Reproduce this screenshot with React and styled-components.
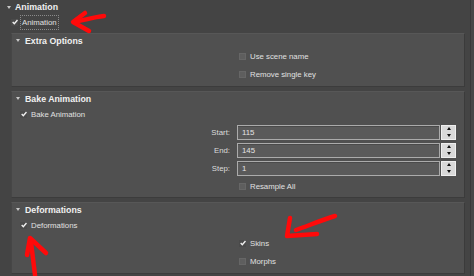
import React from "react";
import styled, { createGlobalStyle } from "styled-components";

const GlobalStyle = createGlobalStyle`
  html, body {
    margin: 0;
    padding: 0;
    background: #444444;
    overflow: hidden;
  }
  * {
    box-sizing: border-box;
  }
`;

const Screen = styled.div`
  position: relative;
  display: flex;
  width: 474px;
  height: 276px;
  overflow: hidden;
  background: #444444;
  font-family: "Liberation Sans", Arial, sans-serif;
  color: #e0e0e0;
`;

const Main = styled.div`
  flex: 1;
  display: flex;
  flex-direction: column;
`;

const ScrollTrack = styled.div`
  width: 4px;
  background: #474747;
  border-left: 1px solid #393939;
`;

const RollHeader = styled.div`
  height: ${p => p.h || 13}px;
  display: flex;
  align-items: center;
  padding-left: ${p => p.indent}px;
  font-size: 8.8px;
  font-weight: bold;
  color: #f0f0f0;
`;

const Triangle = styled.span`
  width: 0;
  height: 0;
  border-left: 2.5px solid transparent;
  border-right: 2.5px solid transparent;
  border-top: 3px solid #c8c8c8;
  margin-right: ${p => p.gap}px;
`;

const Row = styled.div`
  height: ${p => p.h || 18}px;
  display: flex;
  align-items: center;
  padding-left: ${p => p.indent}px;
  font-size: 7.8px;
`;

const Box = styled.span`
  width: 7px;
  height: 7px;
  flex: none;
  display: inline-flex;
  align-items: center;
  justify-content: center;
  background: ${p => (p.checked ? "#4a4a4a" : "#5e5e5e")};
  border: 1px solid ${p => (p.checked ? "#4a4a4a" : "#666666")};
  margin-right: 2px;
`;

const Label = styled.span`
  padding: 2px 1px;
  border: 1px dotted ${p => (p.focused ? "#8a8a8a" : "transparent")};
  white-space: nowrap;
`;

const Panels = styled.div`
  display: flex;
  flex-direction: column;
  gap: 4px;
  margin: 3px 5px 0 11px;
`;

const Panel = styled.section`
  background: #505050;
  border-top: 1px solid #575757;
  border-bottom: 1px solid #3c3c3c;
  border-right: 1px solid #3b3b3b;
  border-left: 1px solid #464646;
  padding-bottom: ${p => p.pb}px;
`;

const SpinRow = styled.div`
  height: 18px;
  display: grid;
  grid-template-columns: 218px 203px 15px;
  column-gap: 7px;
  align-items: center;
  font-size: 7.8px;
  & > :last-child {
    margin-left: -6px;
  }
`;

const SpinLabel = styled.span`
  text-align: right;
  color: #dcdcdc;
`;

const Field = styled.div`
  height: 15px;
  display: flex;
  align-items: center;
  padding-left: 4px;
  background: #5a5a5a;
  border: 1px solid #ababab;
  box-shadow: inset 0 1px 0 #4a4a4a;
  color: #e4e4e4;
`;

const Spinner = styled.div`
  width: 15px;
  height: 15px;
  display: flex;
  flex-direction: column;
  background: #d9d9d9;
  border: 1px solid #efefef;
`;

const SpinHalf = styled.div`
  flex: 1;
  display: flex;
  align-items: center;
  justify-content: center;
  &::after {
    content: "";
    width: 0;
    height: 0;
    border-left: 2.5px solid transparent;
    border-right: 2.5px solid transparent;
    ${p =>
      p.up
        ? "border-bottom: 3px solid #111;"
        : "border-top: 3px solid #111;"}
  }
`;

const Marks = styled.svg`
  position: absolute;
  left: 0;
  top: 0;
  pointer-events: none;
`;

const Check = ({ checked }) => (
  <Box checked={checked}>
    {checked && (
      <svg width="6" height="6" viewBox="0 0 7 7" style={{ flex: "none" }}>
        <path d="M0.8 3.6 L2.7 5.6 L6.4 1.2" stroke="#f0f0f0" strokeWidth="1.6" fill="none" />
      </svg>
    )}
  </Box>
);

const CheckRow = ({ indent, checked, focused, children }) => (
  <Row indent={indent} h={focused ? 16 : 18}>
    <Check checked={checked} />
    <Label focused={focused}>{children}</Label>
  </Row>
);

const Header = ({ indent, children }) => (
  <RollHeader indent={indent}>
    <Triangle gap={5} />
    {children}
  </RollHeader>
);

const RIGHT = 227;

const fields = [
  { label: "Start:", value: "115" },
  { label: "End:", value: "145" },
  { label: "Step:", value: "1" }
];

export default function App() {
  return (
    <Screen>
      <GlobalStyle />
      <Main>
        <RollHeader indent={7} h={14}>
          <Triangle gap={4} />
          Animation
        </RollHeader>
        <CheckRow indent={11} checked focused>
          Animation
        </CheckRow>

        <Panels>
          <Panel pb={3}>
            <Header indent={4}>Extra Options</Header>
            <CheckRow indent={RIGHT}>Use scene name</CheckRow>
            <CheckRow indent={RIGHT}>Remove single key</CheckRow>
          </Panel>

          <Panel pb={2}>
            <Header indent={4}>Bake Animation</Header>
            <CheckRow indent={8} checked>
              Bake Animation
            </CheckRow>
            {fields.map(f => (
              <SpinRow key={f.label}>
                <SpinLabel>{f.label}</SpinLabel>
                <Field>{f.value}</Field>
                <Spinner>
                  <SpinHalf up />
                  <SpinHalf />
                </Spinner>
              </SpinRow>
            ))}
            <CheckRow indent={RIGHT}>Resample All</CheckRow>
          </Panel>

          <Panel pb={3}>
            <Header indent={4}>Deformations</Header>
            <CheckRow indent={8} checked>
              Deformations
            </CheckRow>
            <CheckRow indent={RIGHT} checked>
              Skins
            </CheckRow>
            <CheckRow indent={RIGHT}>Morphs</CheckRow>
          </Panel>
        </Panels>
      </Main>
      <ScrollTrack />

      <Marks width="474" height="276" viewBox="0 0 474 276">
        <g stroke="#ff0a0a" strokeWidth="4.5" strokeLinecap="round" strokeLinejoin="round" fill="none">
          <path d="M85 13 L73 22 L89 31" />
          <path d="M74 22 C85 20 94 17 104 16" />
          <path d="M290 218 L287 236 L317 234" />
          <path d="M296 230 C310 225 322 220 335 216" />
          <path d="M27 255 L30 238 L46 253" />
          <path d="M31 242 L35 275" />
        </g>
      </Marks>
    </Screen>
  );
}
